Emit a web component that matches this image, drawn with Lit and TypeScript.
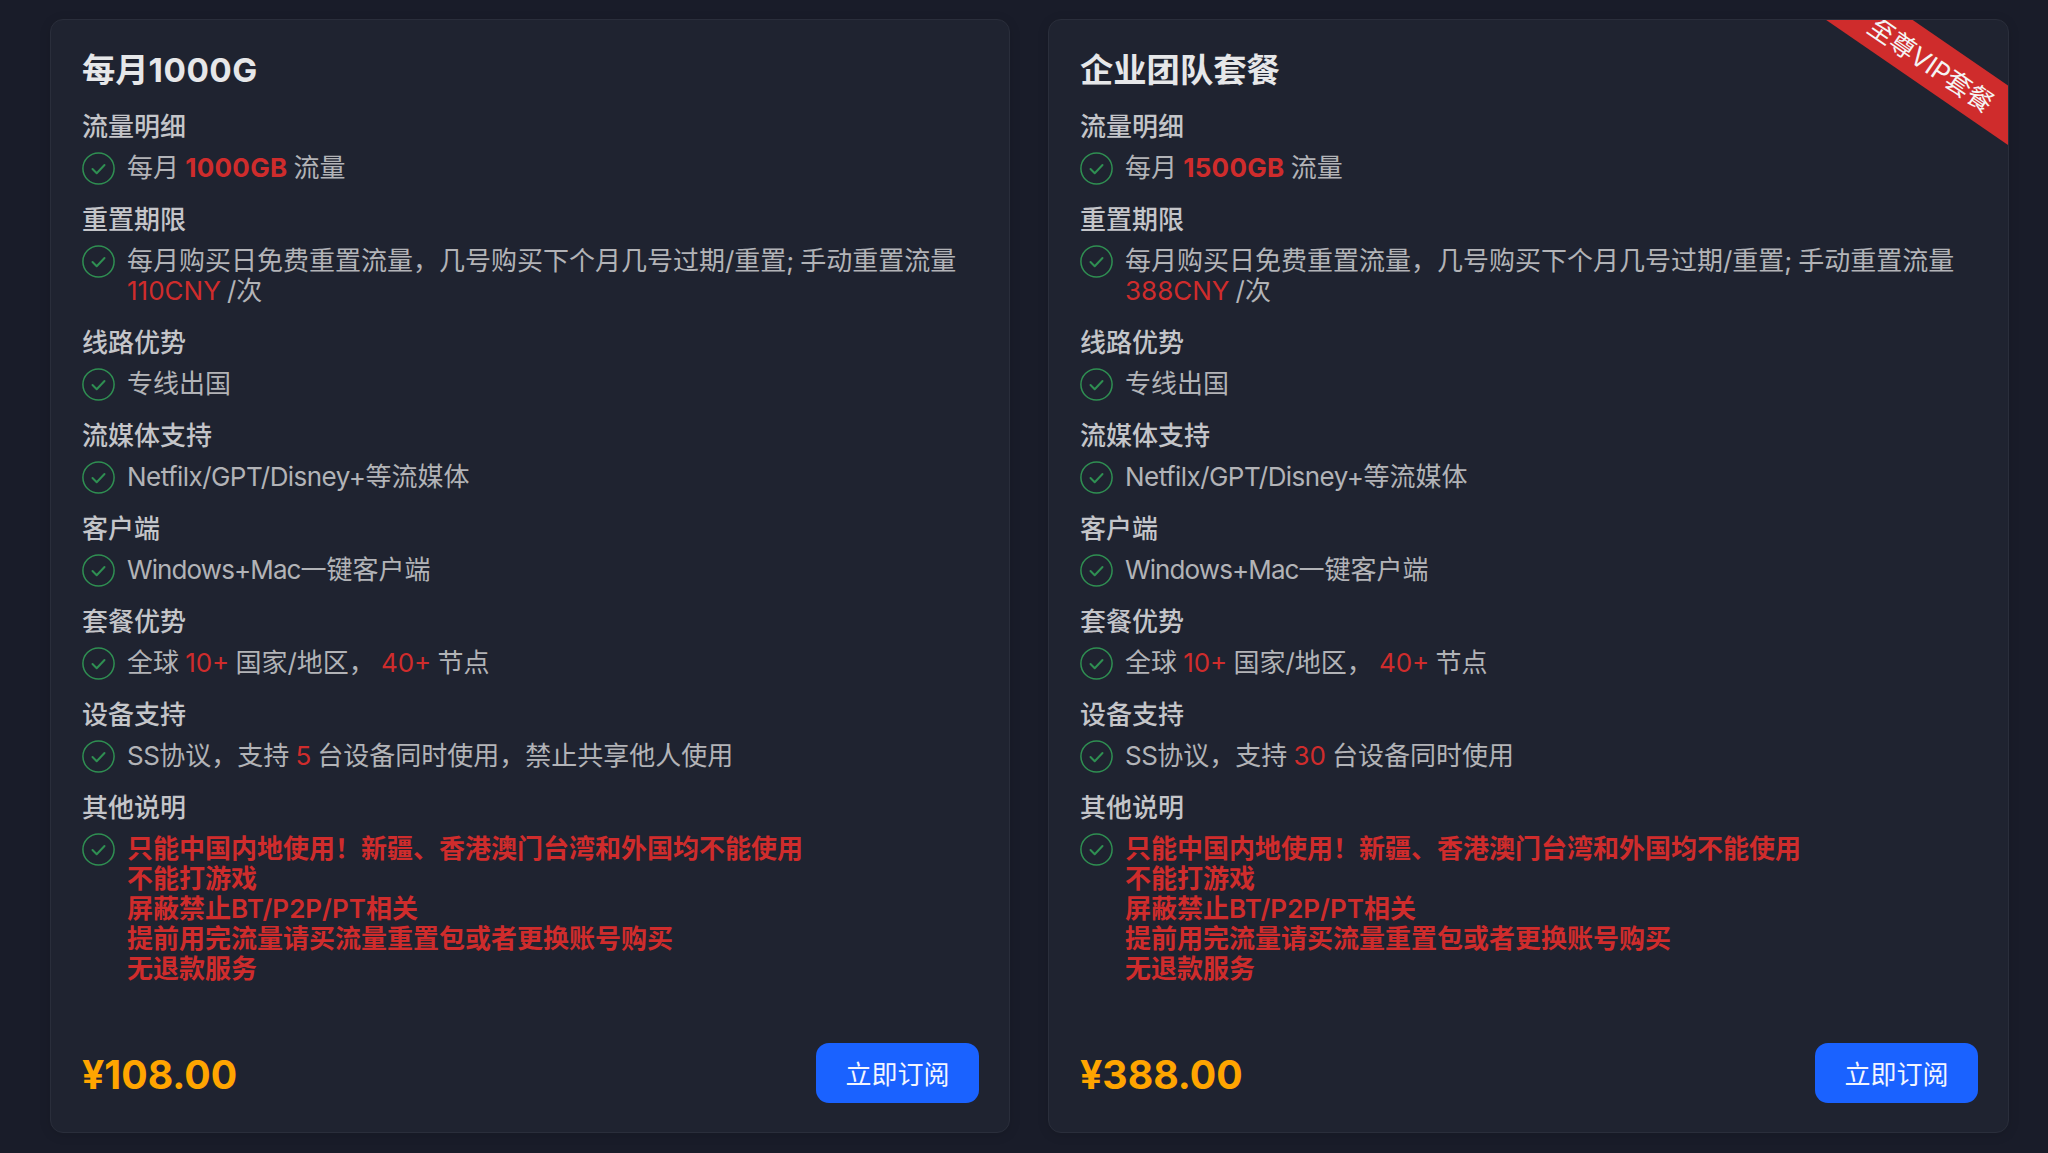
import { LitElement, html, css, nothing, TemplateResult } from 'lit';
import { customElement, property } from 'lit/decorators.js';

interface Plan {
  title: TemplateResult;
  gb: string;
  resetPrice: string;
  devices: TemplateResult;
  price: string;
  vip?: boolean;
}

const PLANS: Plan[] = [
  {
    title: html`每月<span class="wide">1000G</span>`,
    gb: '1000GB',
    resetPrice: '110CNY',
    devices: html`<span class="lat">SS</span>协议，支持 <span class="red">5</span> 台设备同时使用，禁止共享他人使用`,
    price: '¥108.00',
  },
  {
    title: html`企业团队套餐`,
    gb: '1500GB',
    resetPrice: '388CNY',
    devices: html`<span class="lat">SS</span>协议，支持 <span class="red">30</span> 台设备同时使用`,
    price: '¥388.00',
    vip: true,
  },
];

const check = html`<svg class="check" viewBox="0 0 33 33" fill="none" stroke="#2f8f52">
  <circle cx="16.5" cy="16.5" r="15.6" stroke-width="1.5"></circle>
  <path d="M10.5 17l4.2 4.2 7.8-8.2" stroke-width="2" stroke-linecap="round" stroke-linejoin="round"></path>
</svg>`;

@customElement('plan-card')
export class PlanCard extends LitElement {
  @property({ attribute: false }) plan!: Plan;

  static styles = css`
    :host {
      display: flex;
      flex-direction: column;
      position: relative;
      overflow: hidden;
      box-sizing: border-box;
      padding: 31px 30px 29px 31px;
      background: #1f2330;
      border: 1px solid #2a2e3b;
      border-radius: 13px;
      box-shadow: 0 2px 12px rgba(0, 0, 0, 0.12);
    }
    h2 {
      margin: 0 0 23px;
      font-size: 33.3px;
      line-height: 38px;
      font-weight: 700;
      color: #e6e7e9;
    }
    .wide {
      letter-spacing: 0.5px;
    }
    .label {
      font-size: 26px;
      line-height: 30px;
      font-weight: 500;
      color: #c4c5c9;
      margin-bottom: 11px;
    }
    .row {
      display: flex;
      gap: 12px;
      font-size: 26px;
      line-height: 30px;
      word-spacing: -1.2px;
      color: #b2b3b7;
      margin-bottom: 22px;
    }
    .check {
      flex: none;
      width: 33px;
      height: 33px;
      margin: -1px 0 -2px;
    }
    .red {
      color: #cf2c2c;
    }
    .bold {
      font-weight: 700;
      letter-spacing: 0.3px;
    }
    /* latin runs come out a bit wide in Inter */
    .lat {
      letter-spacing: -0.55px;
    }
    .lat-win {
      letter-spacing: -0.9px;
    }
    .notes {
      font-weight: 600;
      color: #cf2c2c;
    }
    .footer {
      margin-top: auto;
      display: flex;
      justify-content: space-between;
      align-items: center;
    }
    .price {
      padding-top: 2px;
      font-size: 39.2px;
      font-weight: 700;
      color: #ffa500;
    }
    button {
      width: 163px;
      height: 60px;
      padding: 0 0 2px;
      border: none;
      border-radius: 13px;
      background: #1a62ff;
      color: #f2f5ff;
      font: inherit;
      font-size: 26px;
    }
    .ribbon {
      position: absolute;
      top: 43px;
      left: 883px;
      width: 320px;
      height: 49px;
      transform: translate(-50%, -50%) rotate(34.5deg);
      background: #cf2c2c;
      color: #f4f4f4;
      font-size: 26px;
      line-height: 54px;
      text-align: center;
    }
  `;

  private section(label: string, body: unknown, cls = '') {
    return html`<div class="label">${label}</div>
      <div class="row ${cls}">${check}<div>${body}</div></div>`;
  }

  render() {
    const p = this.plan;
    return html`
      ${p.vip ? html`<div class="ribbon">至尊VIP套餐</div>` : nothing}
      <h2>${p.title}</h2>
      ${this.section('流量明细', html`每月 <span class="red bold">${p.gb}</span> 流量`)}
      ${this.section('重置期限', html`每月购买日免费重置流量，几号购买下个月几号过期/重置; 手动重置流量 <span class="red">${p.resetPrice}</span> /次`)}
      ${this.section('线路优势', '专线出国')}
      ${this.section('流媒体支持', html`<span class="lat">Netfilx/GPT/Disney+</span>等流媒体`)}
      ${this.section('客户端', html`<span class="lat-win">Windows+Mac</span>一键客户端`)}
      ${this.section('套餐优势', html`全球 <span class="red">10+</span> 国家/地区， <span class="red">40+</span> 节点`)}
      ${this.section('设备支持', p.devices)}
      ${this.section(
        '其他说明',
        html`只能中国内地使用！新疆、香港澳门台湾和外国均不能使用<br />不能打游戏<br />屏蔽禁止BT/P2P/PT相关<br />提前用完流量请买流量重置包或者更换账号购买<br />无退款服务`,
        'notes'
      )}
      <div class="footer">
        <span class="price">${p.price}</span>
        <button>立即订阅</button>
      </div>
    `;
  }
}

@customElement('app-root')
export class AppRoot extends LitElement {
  static styles = css`
    :host {
      display: grid;
      grid-template-columns: 960px 961px;
      gap: 38px;
      box-sizing: border-box;
      height: 1153px;
      padding: 19px 39px 20px 50px;
      background: #191c29;
      font-family: Inter, 'Noto Sans CJK SC', sans-serif;
    }
  `;

  render() {
    return PLANS.map((p) => html`<plan-card .plan=${p}></plan-card>`);
  }
}
